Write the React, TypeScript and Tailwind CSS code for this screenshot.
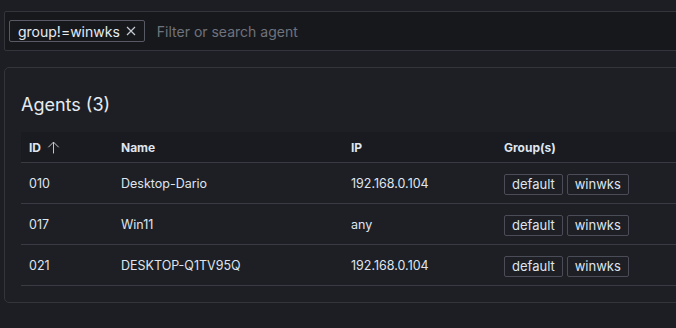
import React from "react";

const agents = [
  { id: "010", name: "Desktop-Dario", ip: "192.168.0.104", groups: ["default", "winwks"] },
  { id: "017", name: "Win11", ip: "any", groups: ["default", "winwks"] },
  { id: "021", name: "DESKTOP-Q1TV95Q", ip: "192.168.0.104", groups: ["default", "winwks"] },
];

const Badge = ({ label }: { label: string }) => (
  <span className="inline-flex h-[21px] items-center rounded-[2px] border border-[#4a4d57] px-[7px] text-[13px] leading-none text-[#dfe5ef]">
    {label}
  </span>
);

export default function App() {
  return (
    <div
      className="h-[328px] w-[676px] overflow-hidden bg-[#1d1e23] pt-[11px] pl-[4px]"
      style={{ fontFamily: "Inter, 'Noto Sans', sans-serif" }}
    >
      {/* search bar */}
      <div className="flex h-[40px] w-[700px] items-center gap-[12px] rounded-[2px] border border-[#33353d] bg-[#17181c] pl-[4px]">
        <span className="flex h-[22px] items-center gap-[6px] rounded-[2px] border border-[#575a64] px-[8px] text-[14px] text-[#e6ebf2]">
          group!=winwks
          <svg width="10" height="10" viewBox="0 0 10 10" className="text-[#c5cad3]">
            <path d="M1 1 L9 9 M9 1 L1 9" stroke="currentColor" strokeWidth="1.2" />
          </svg>
        </span>
        <span className="text-[14px] text-[#6f737d]">Filter or search agent</span>
      </div>

      {/* agents panel */}
      <div className="mt-[16px] h-[236px] w-[700px] rounded-[5px] border border-[#33353d] bg-[#1e1f24] pl-[16px] pt-[24px]">
        <h2 className="text-[18px] leading-[26px] text-[#e6ebf2]">Agents (3)</h2>
        <table className="mt-[14px] w-full border-collapse text-left">
          <thead>
            <tr className="h-[30px] border-b border-[#393b44] bg-[#1a1b20] text-[12px] font-bold text-[#dfe5ef]">
              <th className="w-[100px] pl-[8px] pt-[2px] font-bold">
                <span className="inline-flex items-center gap-[6px]">
                  ID
                  <svg width="13" height="13" viewBox="0 0 12 12" className="text-[#c5cad3]">
                    <path d="M6 11.5 V1 M1.2 5.8 L6 1 L10.8 5.8" fill="none" stroke="currentColor" strokeWidth="0.9" />
                  </svg>
                </span>
              </th>
              <th className="w-[230px] pt-[2px] font-bold">Name</th>
              <th className="w-[153px] pt-[2px] font-bold">IP</th>
              <th className="pt-[2px] font-bold">Group(s)</th>
            </tr>
          </thead>
          <tbody>
            {agents.map((a) => (
              <tr key={a.id} className="h-[41px] border-b border-[#393b44] text-[12.5px] text-[#dfe5ef]">
                <td className="pl-[8px] pt-[3px]">{a.id}</td>
                <td className="pt-[3px]">{a.name}</td>
                <td className="pt-[3px]">{a.ip}</td>
                <td className="pt-[3px]">
                  <div className="flex gap-[4px]">
                    {a.groups.map((g) => (
                      <Badge key={g} label={g} />
                    ))}
                  </div>
                </td>
              </tr>
            ))}
          </tbody>
        </table>
      </div>
    </div>
  );
}
